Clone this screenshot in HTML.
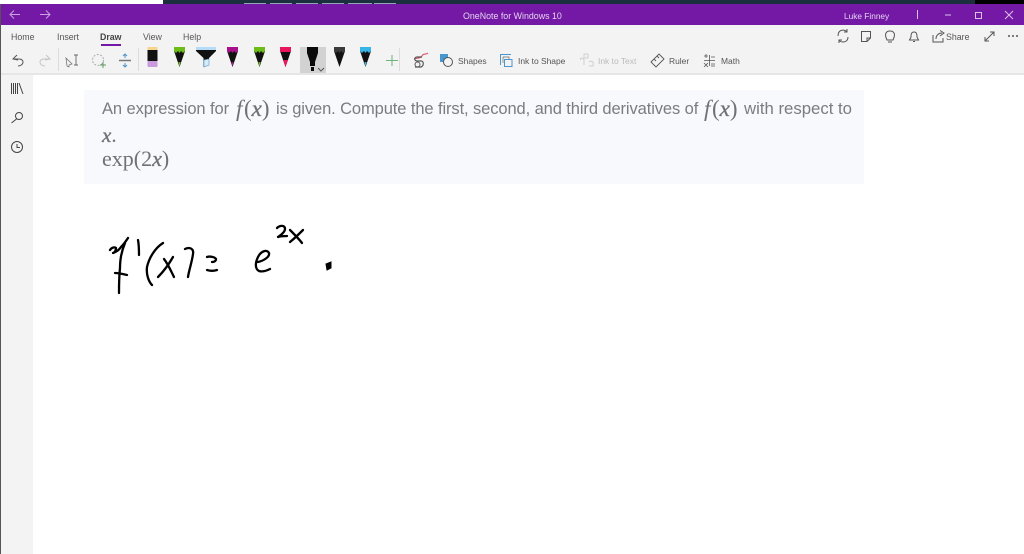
<!DOCTYPE html>
<html><head><meta charset="utf-8">
<style>
html,body{margin:0;padding:0;background:#fff;width:1024px;height:554px;overflow:hidden}
body{position:relative;font-family:"Liberation Sans",sans-serif}
#w{position:absolute;left:0;top:0;width:1024px;height:554px;filter:blur(.3px)}
.a{position:absolute;white-space:nowrap}
.r{font-size:8.45px;color:#555;line-height:12px}
.t{font-size:8.8px;color:#555;line-height:12px}
.q{font-size:16.5px;color:#7a7c7f;line-height:20px}
.m{font-family:"Liberation Serif",serif;color:#6f7174}
.i{font-style:italic}
.x{font-style:italic;-webkit-text-stroke:.35px #6f7174}
</style></head><body><div id="w">
<div class="a" style="left:163px;top:0;width:812px;height:4px;background:#1c2f3e"></div>
<div class="a" style="left:975px;top:0;width:49px;height:4px;background:#000"></div>
<div class="a" style="left:244px;top:3px;width:22px;height:1px;background:#8fa6b8"></div>
<div class="a" style="left:270px;top:3px;width:22px;height:1px;background:#8fa6b8"></div>
<div class="a" style="left:296px;top:3px;width:22px;height:1px;background:#8fa6b8"></div>
<div class="a" style="left:322px;top:3px;width:22px;height:1px;background:#8fa6b8"></div>
<div class="a" style="left:348px;top:3px;width:24px;height:1px;background:#8fa6b8"></div>
<div class="a" style="left:374px;top:3px;width:22px;height:1px;background:#8fa6b8"></div>
<div class="a" style="left:0;top:4px;width:1024px;height:21px;background:#7319a5"></div>
<div class="a" style="left:0;top:25px;width:1024px;height:48px;background:#f3f3f3"></div>
<div class="a" style="left:0;top:73px;width:1024px;height:2px;background:#e6e6e6"></div>
<div class="a" style="left:0;top:75px;width:33px;height:479px;background:#f3f3f3"></div>
<div class="a" style="left:0;top:4px;width:1px;height:550px;background:#555"></div>
<div class="a" style="left:84px;top:90px;width:780px;height:94px;background:#f8f9fc"></div>
<div class="a" style="left:300px;top:47px;width:26px;height:26px;background:#d2d2d2"></div>

<div class="a" style="left:463px;top:9.500px;font-size:8.850px;line-height:12px;color:#e6d4f0">OneNote for Windows 10</div>
<div class="a" style="left:844px;top:10px;font-size:8.300px;line-height:12px;color:#e6d4f0">Luke Finney</div>

<div class="a t" style="left:11px;top:30.500px">Home</div>
<div class="a t" style="left:57px;top:30.500px">Insert</div>
<div class="a t" style="left:100px;top:30.500px;font-weight:bold;color:#444">Draw</div>
<div class="a" style="left:101px;top:44px;width:20px;height:2px;background:#7319a5"></div>
<div class="a t" style="left:143px;top:30.500px">View</div>
<div class="a t" style="left:183px;top:30.500px">Help</div>
<div class="a t" style="left:946px;top:30.500px">Share</div>

<div class="a r" style="left:458px;top:54.500px">Shapes</div>
<div class="a r" style="left:518px;top:54.500px">Ink to Shape</div>
<div class="a r" style="left:598px;top:54.500px;color:#bbb">Ink to Text</div>
<div class="a r" style="left:669px;top:54.500px">Ruler</div>
<div class="a r" style="left:721px;top:54.500px">Math</div>

<svg class="a" style="left:0;top:0" width="1024" height="554" viewBox="0 0 1024 554" fill="none">
<g stroke="#c9a3dd" stroke-width="1">
<path d="M10 14.500H20M14 10.500L10 14.500L14 18.500"/>
<path d="M40 14.500H50M46 10.500L50 14.500L46 18.500"/>
</g>
<g stroke="#d9c2e6" stroke-width="1">
<path d="M917.500 10V19"/>
<path d="M945 15H951"/>
<rect x="975.500" y="12.500" width="6" height="6"/>
<path d="M1005 11L1013 19M1013 11L1005 19"/>
</g>
<path d="M17 55L13 59L18 60M13 59H19C25 59 24 66 18 66" stroke="#555" stroke-width="1"/>
<path d="M46 55L50 59L45 60M50 59H44C38 59 39 66 45 66" stroke="#c4c4c4" stroke-width="1"/>
<path d="M58.500 48V71M138.500 48V71M399.500 48V71" stroke="#dcdcdc"/>
<path d="M66 58L72 64L69 65L69 67L67 66Z" stroke="#777" stroke-width=".8"/>
<path d="M74 55H78M76 55V65M74 65H78" stroke="#666" stroke-width=".9"/>
<circle cx="98" cy="60" r="5.500" stroke="#aaa" stroke-width="1" stroke-dasharray="2 1.500"/>
<path d="M100 65H106M103 62V68" stroke="#5d9b63" stroke-width="1"/>
<path d="M119 60.500H131" stroke="#777" stroke-width="1.500"/>
<path d="M125 54V58M123 56L125 54L127 56M125 63V67M123 65L125 67L127 65" stroke="#4a96cf" stroke-width="1"/>
<rect x="147.500" y="47" width="10" height="3" fill="#f5d58c"/>
<rect x="147.500" y="50" width="10" height="11" fill="#111"/>
<rect x="147.500" y="61" width="10" height="6" rx="1" fill="#c99ade"/>
<path d="M174 47H185V51L179.500 67L174 51Z" fill="#111"/>
<path d="M174 47H185V51L183 53L181 51L179.500 53L178 51L176 53L174 51Z" fill="#6cbc1a"/>
<path d="M178.500 62H180.500L179.500 67Z" fill="#6cbc1a"/>
<path d="M196 47H216V51L209 58V65L203.500 67V58L196 51Z" fill="#111"/>
<rect x="196" y="47" width="20" height="3" fill="#b4dcf8"/>
<path d="M204 60L209 59V65L204 67Z" fill="#d5ecfb" stroke="#5a9bd0" stroke-width=".6"/>
<path d="M227 47H238V51L232.500 67L227 51Z" fill="#111"/>
<path d="M227 47H238V51L236 53L234 51L232.500 53L231 51L229 53L227 51Z" fill="#a8108c"/>
<path d="M231.500 62H233.500L232.500 67Z" fill="#a8108c"/>
<path d="M254 47H265V51L259.500 67L254 51Z" fill="#111"/>
<path d="M254 47H265V51L263 53L261 51L259.500 53L258 51L256 53L254 51Z" fill="#6cbc1a"/>
<path d="M258.500 62H260.500L259.500 67Z" fill="#6cbc1a"/>
<path d="M280 47H291V51L285.500 67L280 51Z" fill="#111"/>
<path d="M280 47H291V52H280Z" fill="#e8175d"/>
<path d="M283 60H288L285.500 67Z" fill="#e8175d"/>
<path d="M307 47H318V53L315 62V66H310V62L307 53Z" fill="#0a0a0a"/>
<rect x="311" y="67" width="3" height="4" fill="#0a0a0a"/>
<path d="M318 68L321 71L324 68" stroke="#555" stroke-width="1"/>
<path d="M334 47H345V51L339.500 67L334 51Z" fill="#111"/>
<path d="M334 47H345V51L343 53L341 51L339.500 53L338 51L336 53L334 51Z" fill="#3a3a3a"/>
<path d="M360 47H371V51L365.500 67L360 51Z" fill="#111"/>
<path d="M360 47H371V51L369 53L367 51L365.500 53L364 51L362 53L360 51Z" fill="#36b5e6"/>
<path d="M364.500 62H366.500L365.500 67Z" fill="#36b5e6"/>
<path d="M386 60.500H398M392 55V66" stroke="#6fb27a" stroke-width="1"/>
<path d="M414 59C418 58 421 58 422 56C423 53 426 55 428 53" stroke="#d9506b" stroke-width="1.100"/>
<path d="M422 57H417C414 57 414 61 417 61H421C424 61 424 66 421 67H415" stroke="#555" stroke-width="1.200"/>
<circle cx="417.500" cy="64.500" r="2.500" stroke="#555"/>
<rect x="440" y="54" width="8" height="8" fill="#4a96cf"/>
<circle cx="448" cy="62" r="4.500" fill="#f3f3f3" stroke="#555"/>
<path d="M500.500 65V54.500H511" stroke="#4a96cf"/>
<rect x="504.500" y="59.500" width="7.500" height="7" stroke="#4a96cf"/>
<path d="M503 57H509V59M503 57V63" stroke="#666" stroke-width=".7"/>
<path d="M584 54H588V58H584ZM581 60C579 58 583 57 584 60V65M589 62C592 60 594 62 593 66H589" stroke="#cfcfcf"/>
<path d="M651 62L659 54L664 59L656 67ZM654 59L656 61M657 56L659 58" stroke="#555" stroke-width=".9"/>
<path d="M704 60.500H715M709.500 55V66M704 56H708M706 54V58M711 57H715M704 63L708 67M708 63L704 67M711 64H715M711 66H715" stroke="#555" stroke-width=".8"/>
<g stroke="#555" stroke-width="1">
<path d="M838 36C838 29 845 29 847 32M848 37C848 43 841 43 839 40M847 29V32H844M839 43V40H842"/>
<path d="M861.500 31.500H870.500V38L867 41.500H861.500ZM870 38H867V41"/>
<path d="M887 40C884 34 886 31 890 31C894 31 896 34 893 40ZM888 42H892"/>
<path d="M914 32C911 32 911 35 911 37L909.500 40H918.500L917 37C917 35 917 32 914 32ZM913 41.500H915"/>
<path d="M933 35V42H943V38M936 39C936 35 939 33 942 33M940 30.500L944 33L940 36"/>
<path d="M985 41L994 32M990 32H994V36M985 37V41H989"/>
</g>
<g fill="#555"><circle cx="1009" cy="36" r="1"/><circle cx="1013" cy="36" r="1"/><circle cx="1017" cy="36" r="1"/></g>
<g stroke="#444" stroke-width="1">
<path d="M11.500 83V94M13.500 83V94M15.500 83V94M17.500 83V94M19 83L23 94"/>
<circle cx="19" cy="116" r="3.500"/>
<path d="M16.500 119L11.500 123"/>
<circle cx="17" cy="147" r="5.500"/>
<path d="M17 144V147.500H20"/>
</g>
<g stroke="#000" stroke-width="2.300" stroke-linecap="round" stroke-linejoin="round">
<path d="M110 250C112 247 115 247 116 248C116 251 114 253 113 253C116 252 119 250 121 247C124 244 126 241 128 238"/>
<path d="M125 243C122 250 120 258 120 268C119 277 119 285 119 293"/>
<path d="M115 273C118 273 123 274 127 275"/>
<path d="M138 240C139 245 139 250 139 255"/>
<path d="M163 243C155 248 149 258 147 267C146 275 149 282 152 285"/>
<path d="M164 259C168 264 171 271 174 277"/>
<path d="M173 257C169 264 164 271 158 277"/>
<path d="M185 249C189 247 194 248 193 254C192 262 189 270 188 277"/>
<path d="M207 257C210 256 215 257 216 259C216 261 214 262 212 262"/>
<path d="M207 270C210 271 214 271 217 270"/>
<path d="M258 262C263 261 270 257 269 253C267 249 261 251 258 257C255 263 255 269 259 271C262 272 266 271 270 269"/>
<path d="M277 228C280 225 285 225 285 229C285 232 281 235 278 237C281 236 284 236 287 236"/>
<path d="M290 230C294 234 299 239 302 243"/>
<path d="M303 230C299 234 295 238 290 242"/>
</g>
<path d="M326 264L331 262L331 268L327 270Z" fill="#000" stroke="#000"/>
</svg>

<div class="a q" style="left:102px;top:99px;letter-spacing:-.08px">An expression for</div>
<div class="a m i" style="left:236px;top:96px;font-size:23px;line-height:26px">f</div>
<div class="a m" style="left:244px;top:96px;font-size:23px;line-height:26px">(<span class="x">x</span>)</div>
<div class="a q" style="left:276px;top:99px;letter-spacing:-.1px">is given. Compute the first, second, and third derivatives of</div>
<div class="a m i" style="left:704px;top:96px;font-size:23px;line-height:26px">f</div>
<div class="a m" style="left:712px;top:96px;font-size:23px;line-height:26px">(<span class="x">x</span>)</div>
<div class="a q" style="left:744px;top:99px;font-size:16.75px">with respect to</div>
<div class="a m" style="left:102px;top:122px;font-size:21px;line-height:26px"><span class="x">x</span>.</div>
<div class="a m" style="left:102px;top:146px;font-size:22px;line-height:26px">exp(2<span class="x">x</span>)</div>
</div></body></html>
